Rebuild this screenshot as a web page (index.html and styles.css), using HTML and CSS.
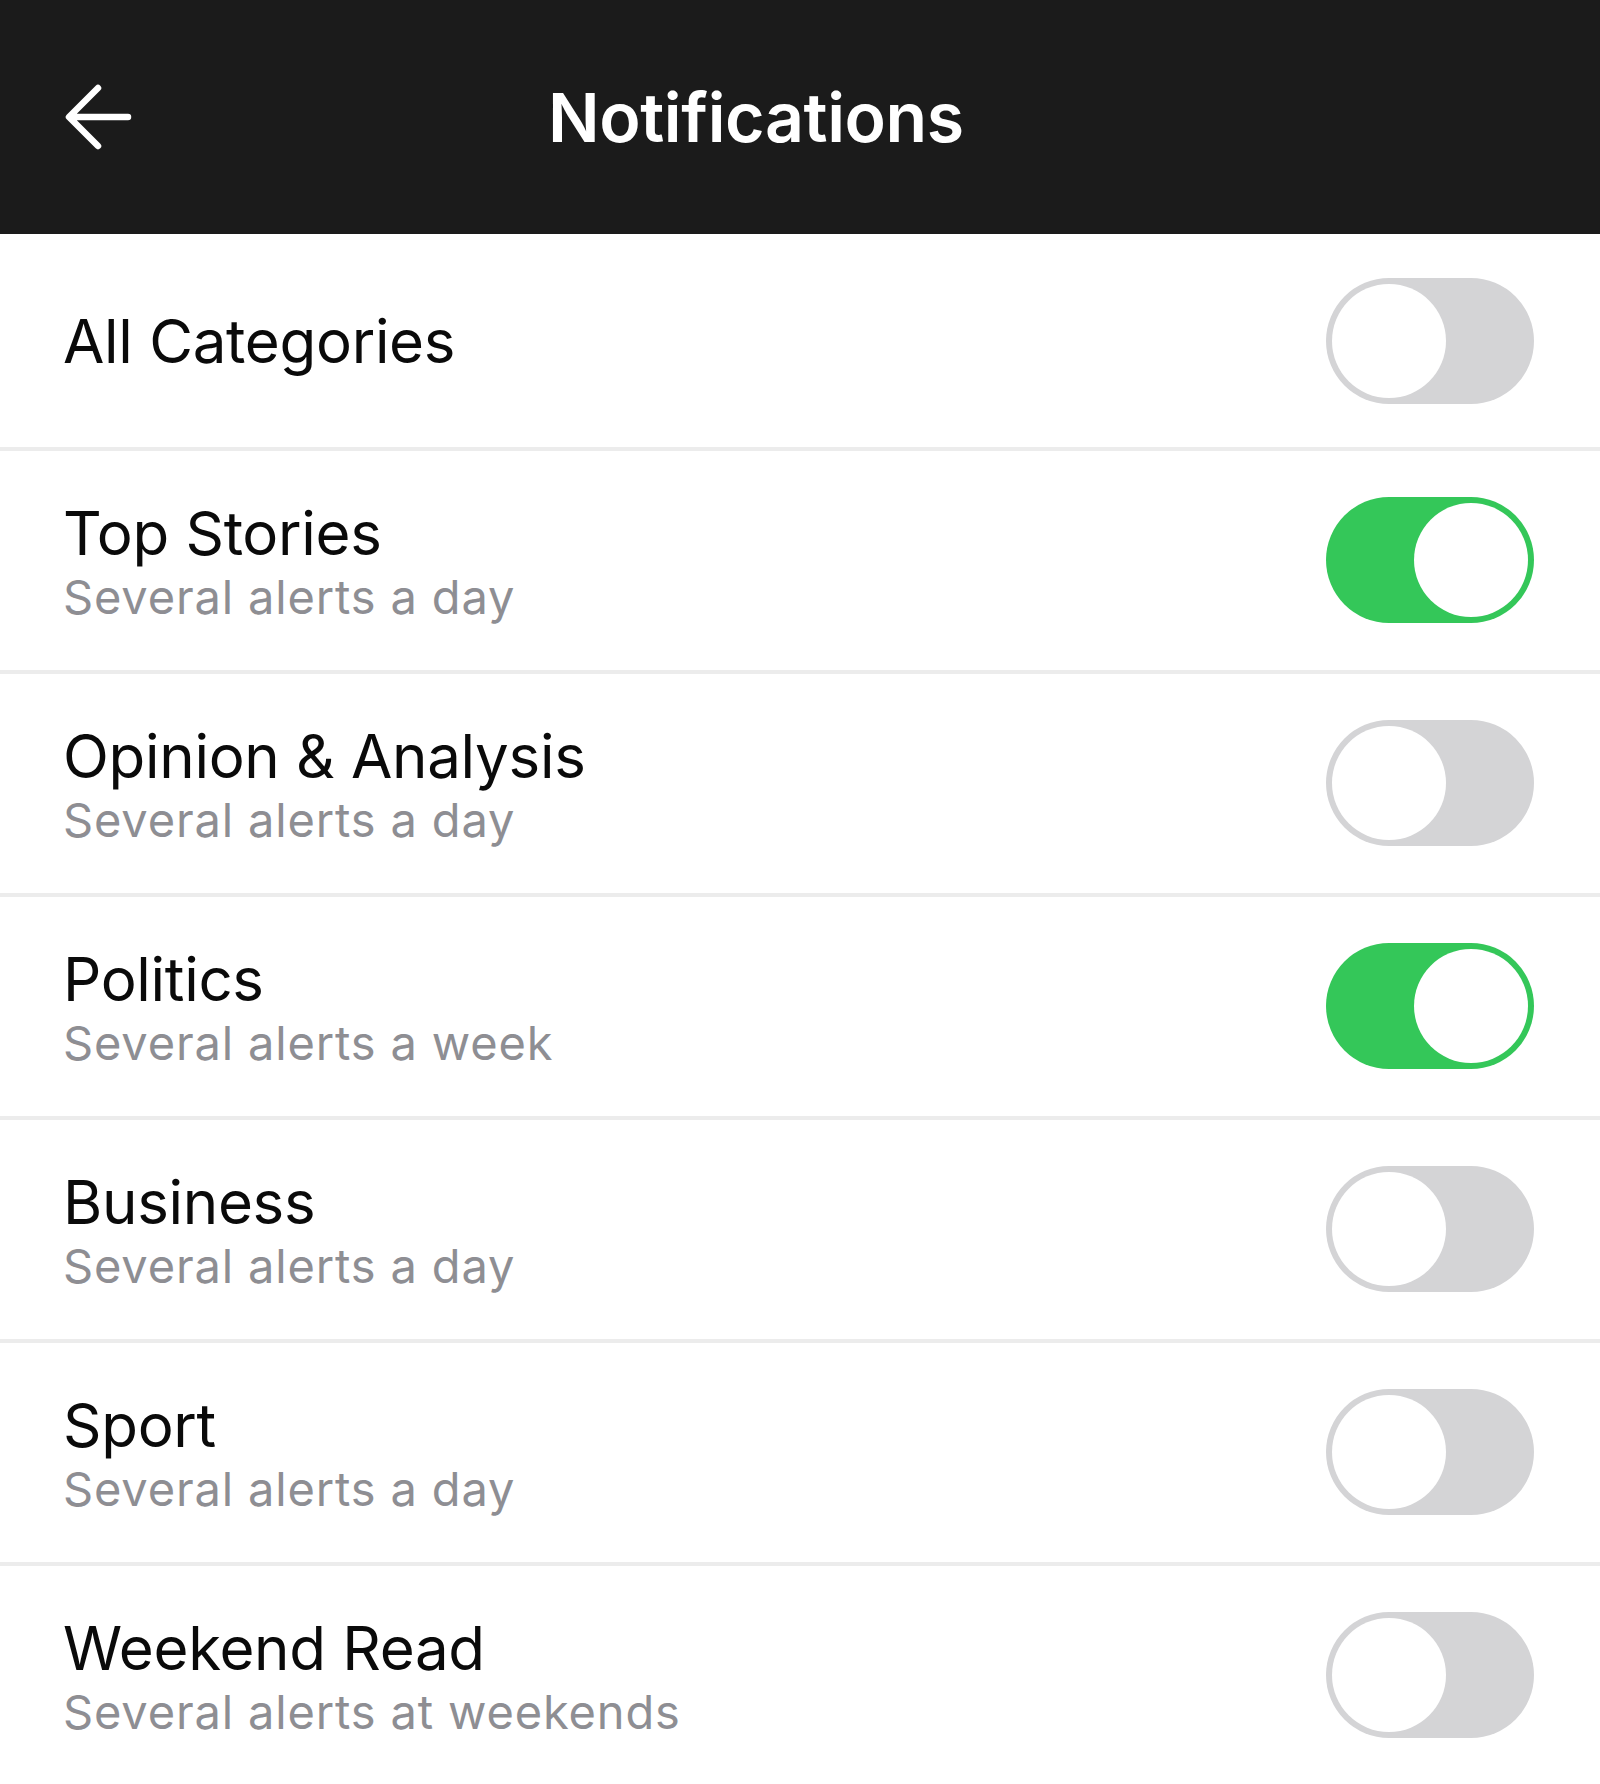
FILE: index.html
```html
<!DOCTYPE html>
<html>
<head>
<meta charset="utf-8">
<link rel="stylesheet" href="styles.css">
</head>
<body>
<header class="topbar">
  <button class="back" aria-label="Back">
    <svg viewBox="0 0 68 66" width="68" height="66"><path d="M64 33H6M34 4L5 33l29 29" fill="none" stroke="#fff" stroke-width="6.5" stroke-linecap="round" stroke-linejoin="round"/></svg>
  </button>
  <h1 class="title">Notifications</h1>
</header>
<main class="list">
  <div class="row row-single">
    <div class="texts"><div class="name">All Categories</div></div>
    <span class="toggle"><span class="knob"></span></span>
  </div>
  <div class="row">
    <div class="texts"><div class="name">Top Stories</div><div class="sub">Several alerts a day</div></div>
    <span class="toggle on"><span class="knob"></span></span>
  </div>
  <div class="row">
    <div class="texts"><div class="name">Opinion &amp; Analysis</div><div class="sub">Several alerts a day</div></div>
    <span class="toggle"><span class="knob"></span></span>
  </div>
  <div class="row">
    <div class="texts"><div class="name">Politics</div><div class="sub">Several alerts a week</div></div>
    <span class="toggle on"><span class="knob"></span></span>
  </div>
  <div class="row">
    <div class="texts"><div class="name">Business</div><div class="sub">Several alerts a day</div></div>
    <span class="toggle"><span class="knob"></span></span>
  </div>
  <div class="row">
    <div class="texts"><div class="name">Sport</div><div class="sub">Several alerts a day</div></div>
    <span class="toggle"><span class="knob"></span></span>
  </div>
  <div class="row">
    <div class="texts"><div class="name">Weekend Read</div><div class="sub">Several alerts at weekends</div></div>
    <span class="toggle"><span class="knob"></span></span>
  </div>
</main>
</body>
</html>
```
FILE: styles.css
```css
* { box-sizing: border-box; }
html, body { margin: 0; padding: 0; background: #fff; }
body { font-family: Inter, "Noto Sans", "Liberation Sans", sans-serif; width: 1600px; height: 1784px; overflow: hidden; }
.topbar {
  height: 234px;
  background: #1b1b1b;
  display: flex;
  align-items: center;
  padding: 0 0 0 64px;
}
.back { background: none; border: 0; padding: 0; width: 68px; height: 66px; display: flex; cursor: pointer; }
.title {
  margin: 0 0 0 416px;
  color: #fff;
  font-size: 68px;
  font-weight: 600;
  letter-spacing: -0.4px;
}
.list { display: flex; flex-direction: column; }
.row {
  height: 223px;
  border-top: 4px solid #ececec;
  display: flex;
  align-items: center;
  justify-content: space-between;
  padding: 0 66px 0 63px;
}
.row-single { height: 213px; border-top: 0; }
.row:not(.row-single) .toggle { margin-bottom: 2px; }
.row:not(.row-single) .texts { margin-top: 5px; }
.texts { display: flex; flex-direction: column; }
.name { font-size: 60px; color: #0a0a0a; line-height: 68px; letter-spacing: -0.3px; }
.sub { font-size: 47px; color: #8e8e93; line-height: 60px; letter-spacing: 0.85px; }
.toggle {
  width: 208px; height: 126px;
  border-radius: 63px;
  background: #d4d4d6;
  position: relative;
  flex: none;
}
.knob {
  position: absolute;
  left: 6px; top: 6px;
  width: 114px; height: 114px;
  border-radius: 50%;
  background: #fff;
}
.toggle.on { background: #34c759; }
.toggle.on .knob { left: auto; right: 6px; }
```
